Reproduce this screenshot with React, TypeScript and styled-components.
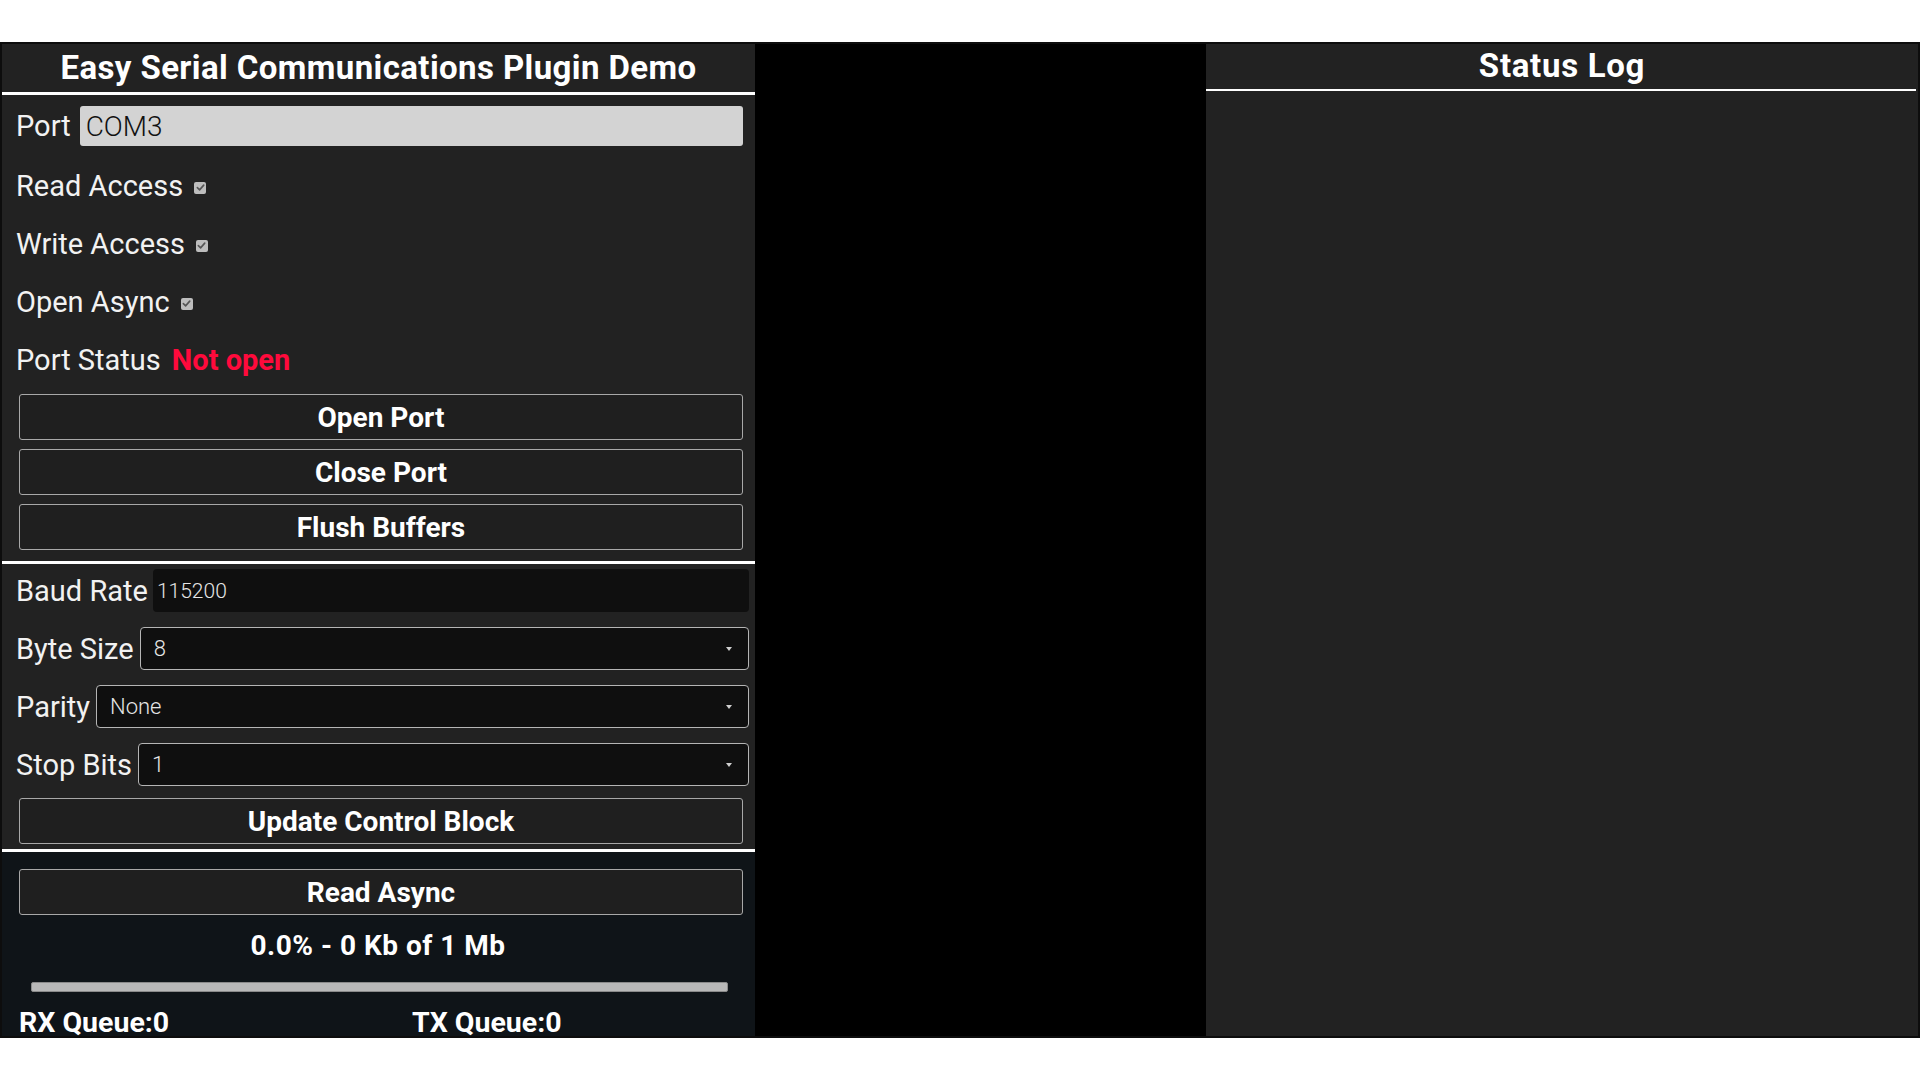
import React from 'react'
import styled, { createGlobalStyle } from 'styled-components'

const GlobalStyle = createGlobalStyle`
  html, body {
    margin: 0;
    padding: 0;
    background: #ffffff;
  }
  body {
    font-family: Roboto, "Liberation Sans", sans-serif;
  }
`

const checks = ['Read Access', 'Write Access', 'Open Async']
const selects = [
  { label: 'Byte Size', value: '8' },
  { label: 'Parity', value: 'None' },
  { label: 'Stop Bits', value: '1' },
]

const CheckMark = () => (
  <svg width="9" height="9" viewBox="0 0 10 10">
    <path d="M1.5 5.2 L4 7.6 L8.6 2.4" fill="none" stroke="#555" strokeWidth="1.8" strokeLinecap="round" strokeLinejoin="round" />
  </svg>
)

const App = () => {
  return (
    <>
      <GlobalStyle />
      <Frame>
        <LeftPanel>
          <Title>Easy Serial Communications Plugin Demo</Title>
          <Divider />
          <Section>
            <FieldRow gap={9}>
              <Label>Port</Label>
              <PortInput readOnly value="COM3" />
            </FieldRow>
            <CheckList>
              {checks.map((c) => (
                <CheckRow key={c}>
                  <Label>{c}</Label>
                  <Box>
                    <CheckMark />
                  </Box>
                </CheckRow>
              ))}
              <CheckRow>
                <Label>Port Status</Label>
                <Status>Not open</Status>
              </CheckRow>
            </CheckList>
            <ButtonStack>
              <Button>Open Port</Button>
              <Button>Close Port</Button>
              <Button>Flush Buffers</Button>
            </ButtonStack>
          </Section>
          <Divider />
          <ConfigSection>
            <FieldRow gap={5} height={45}>
              <Label>Baud Rate</Label>
              <DarkInput readOnly value="115200" />
            </FieldRow>
            {selects.map((s) => (
              <FieldRow key={s.label} gap={6} height={45}>
                <Label>{s.label}</Label>
                <SelectBox>
                  <span>{s.value}</span>
                  <Arrow />
                </SelectBox>
              </FieldRow>
            ))}
            <Button>Update Control Block</Button>
          </ConfigSection>
          <Divider />
          <AsyncSection>
            <Button>Read Async</Button>
            <Progress>0.0% - 0 Kb of 1 Mb</Progress>
            <Bar />
            <Queues>
              <Queue>RX Queue:0</Queue>
              <Queue>TX Queue:0</Queue>
            </Queues>
          </AsyncSection>
        </LeftPanel>
        <Middle />
        <RightPanel>
          <LogTitle>Status Log</LogTitle>
          <LogDivider />
        </RightPanel>
      </Frame>
    </>
  )
}

export default App

const Frame = styled.div`
  margin-top: 42px;
  height: 996px;
  box-sizing: border-box;
  border: 2px solid #0d0d0d;
  background: #000;
  display: flex;
  overflow: hidden;
`
const LeftPanel = styled.div`
  width: 753px;
  flex-shrink: 0;
  background: #222222;
  display: flex;
  flex-direction: column;
  color: #fff;
  overflow: hidden;
  & > * {
    flex-shrink: 0;
  }
`
const Middle = styled.div`
  flex: 1;
  background: #000;
`
const RightPanel = styled.div`
  width: 712px;
  flex-shrink: 0;
  background: #222222;
  color: #fff;
`
const Title = styled.div`
  height: 48px;
  display: flex;
  align-items: center;
  justify-content: center;
  font-size: 33px;
  font-weight: 700;
  letter-spacing: 0.4px;
  padding-bottom: 2px;
  box-sizing: border-box;
  white-space: nowrap;
`
const LogTitle = styled.div`
  height: 45px;
  box-sizing: border-box;
  padding-bottom: 3px;
  display: flex;
  align-items: center;
  justify-content: center;
  font-size: 33px;
  font-weight: 700;
  letter-spacing: 0.7px;
`
const Divider = styled.div`
  height: 3px;
  background: #fff;
`
const LogDivider = styled.div`
  height: 2px;
  margin-right: 2px;
  background: #fff;
`
const Section = styled.div`
  padding: 11px 12px 11px 14px;
  display: flex;
  flex-direction: column;
`
const ConfigSection = styled.div`
  padding: 4px 6px 5px 14px;
  display: flex;
  flex-direction: column;
  gap: 13px;
  & > button {
    width: 724px;
    margin-top: -2px;
    margin-left: 3px;
  }
`
const AsyncSection = styled.div`
  && {
    flex: 1 1 0;
    min-height: 0;
  }
  overflow: hidden;
  background: #0f1418;
  padding: 17px 12px 0 17px;
  display: flex;
  flex-direction: column;
  & > * {
    flex-shrink: 0;
  }
`
const FieldRow = styled.div<{ gap: number; height?: number }>`
  display: flex;
  align-items: center;
  gap: ${(p) => p.gap}px;
  height: ${(p) => p.height ?? 40}px;
`
const Label = styled.span`
  font-size: 29px;
  font-weight: 400;
  color: #f2f2f2;
  white-space: nowrap;
`
const PortInput = styled.input`
  flex: 1;
  height: 40px;
  box-sizing: border-box;
  border: none;
  border-radius: 3px;
  background: #d3d3d3;
  color: #111;
  font-family: Roboto, sans-serif;
  font-size: 28px;
  font-weight: 300;
  padding: 0 6px;
  outline: none;
`
const DarkInput = styled.input`
  flex: 1;
  height: 43px;
  box-sizing: border-box;
  border: none;
  border-radius: 4px;
  background: #0f0f0f;
  color: #e6e6e6;
  font-family: Roboto, sans-serif;
  font-size: 21px;
  font-weight: 300;
  padding: 0 4px;
  outline: none;
`
const SelectBox = styled.div`
  flex: 1;
  height: 43px;
  box-sizing: border-box;
  border: 1.5px solid #b5b5b5;
  border-radius: 4px;
  background: #0f0f0f;
  color: #e6e6e6;
  font-size: 22px;
  font-weight: 300;
  display: flex;
  align-items: center;
  justify-content: space-between;
  padding: 0 16px 0 13px;
`
const Arrow = styled.span`
  width: 0;
  height: 0;
  border-left: 3.5px solid transparent;
  border-right: 3.5px solid transparent;
  border-top: 4px solid #d0d0d0;
`
const CheckList = styled.div`
  margin-top: 11px;
  display: flex;
  flex-direction: column;
`
const CheckRow = styled.div`
  height: 58px;
  display: flex;
  align-items: center;
  gap: 11px;
`
const Box = styled.span`
  width: 12px;
  height: 12px;
  border-radius: 2px;
  background: #bdbdbd;
  display: flex;
  align-items: center;
  justify-content: center;
  margin-top: 3px;
`
const Status = styled.span`
  font-size: 29px;
  font-weight: 700;
  color: #ff0a3c;
`
const ButtonStack = styled.div`
  margin-top: 5px;
  display: flex;
  flex-direction: column;
  gap: 9px;
  padding-left: 3px;
`
const Button = styled.button`
  height: 46px;
  width: 100%;
  box-sizing: border-box;
  background: #1f1f1f;
  border: 1.5px solid #a8a8a8;
  border-radius: 3px;
  color: #fff;
  font-family: Roboto, sans-serif;
  font-size: 28px;
  font-weight: 700;
  flex-shrink: 0;
  padding: 0;
`
const Progress = styled.div`
  height: 60px;
  display: flex;
  align-items: center;
  justify-content: center;
  font-size: 28px;
  font-weight: 700;
  letter-spacing: 0.5px;
  padding-right: 6px;
`
const Bar = styled.div`
  margin: 7px 15px 0 12px;
  height: 10px;
  box-sizing: border-box;
  background: #b8b8b8;
  border: 1px solid #8a8a8a;
  border-radius: 2px;
`
const Queues = styled.div`
  margin-top: 18px;
  display: grid;
  grid-template-columns: 393px 1fr;
`
const Queue = styled.div`
  font-size: 28.5px;
  font-weight: 700;
  line-height: 26px;
`
